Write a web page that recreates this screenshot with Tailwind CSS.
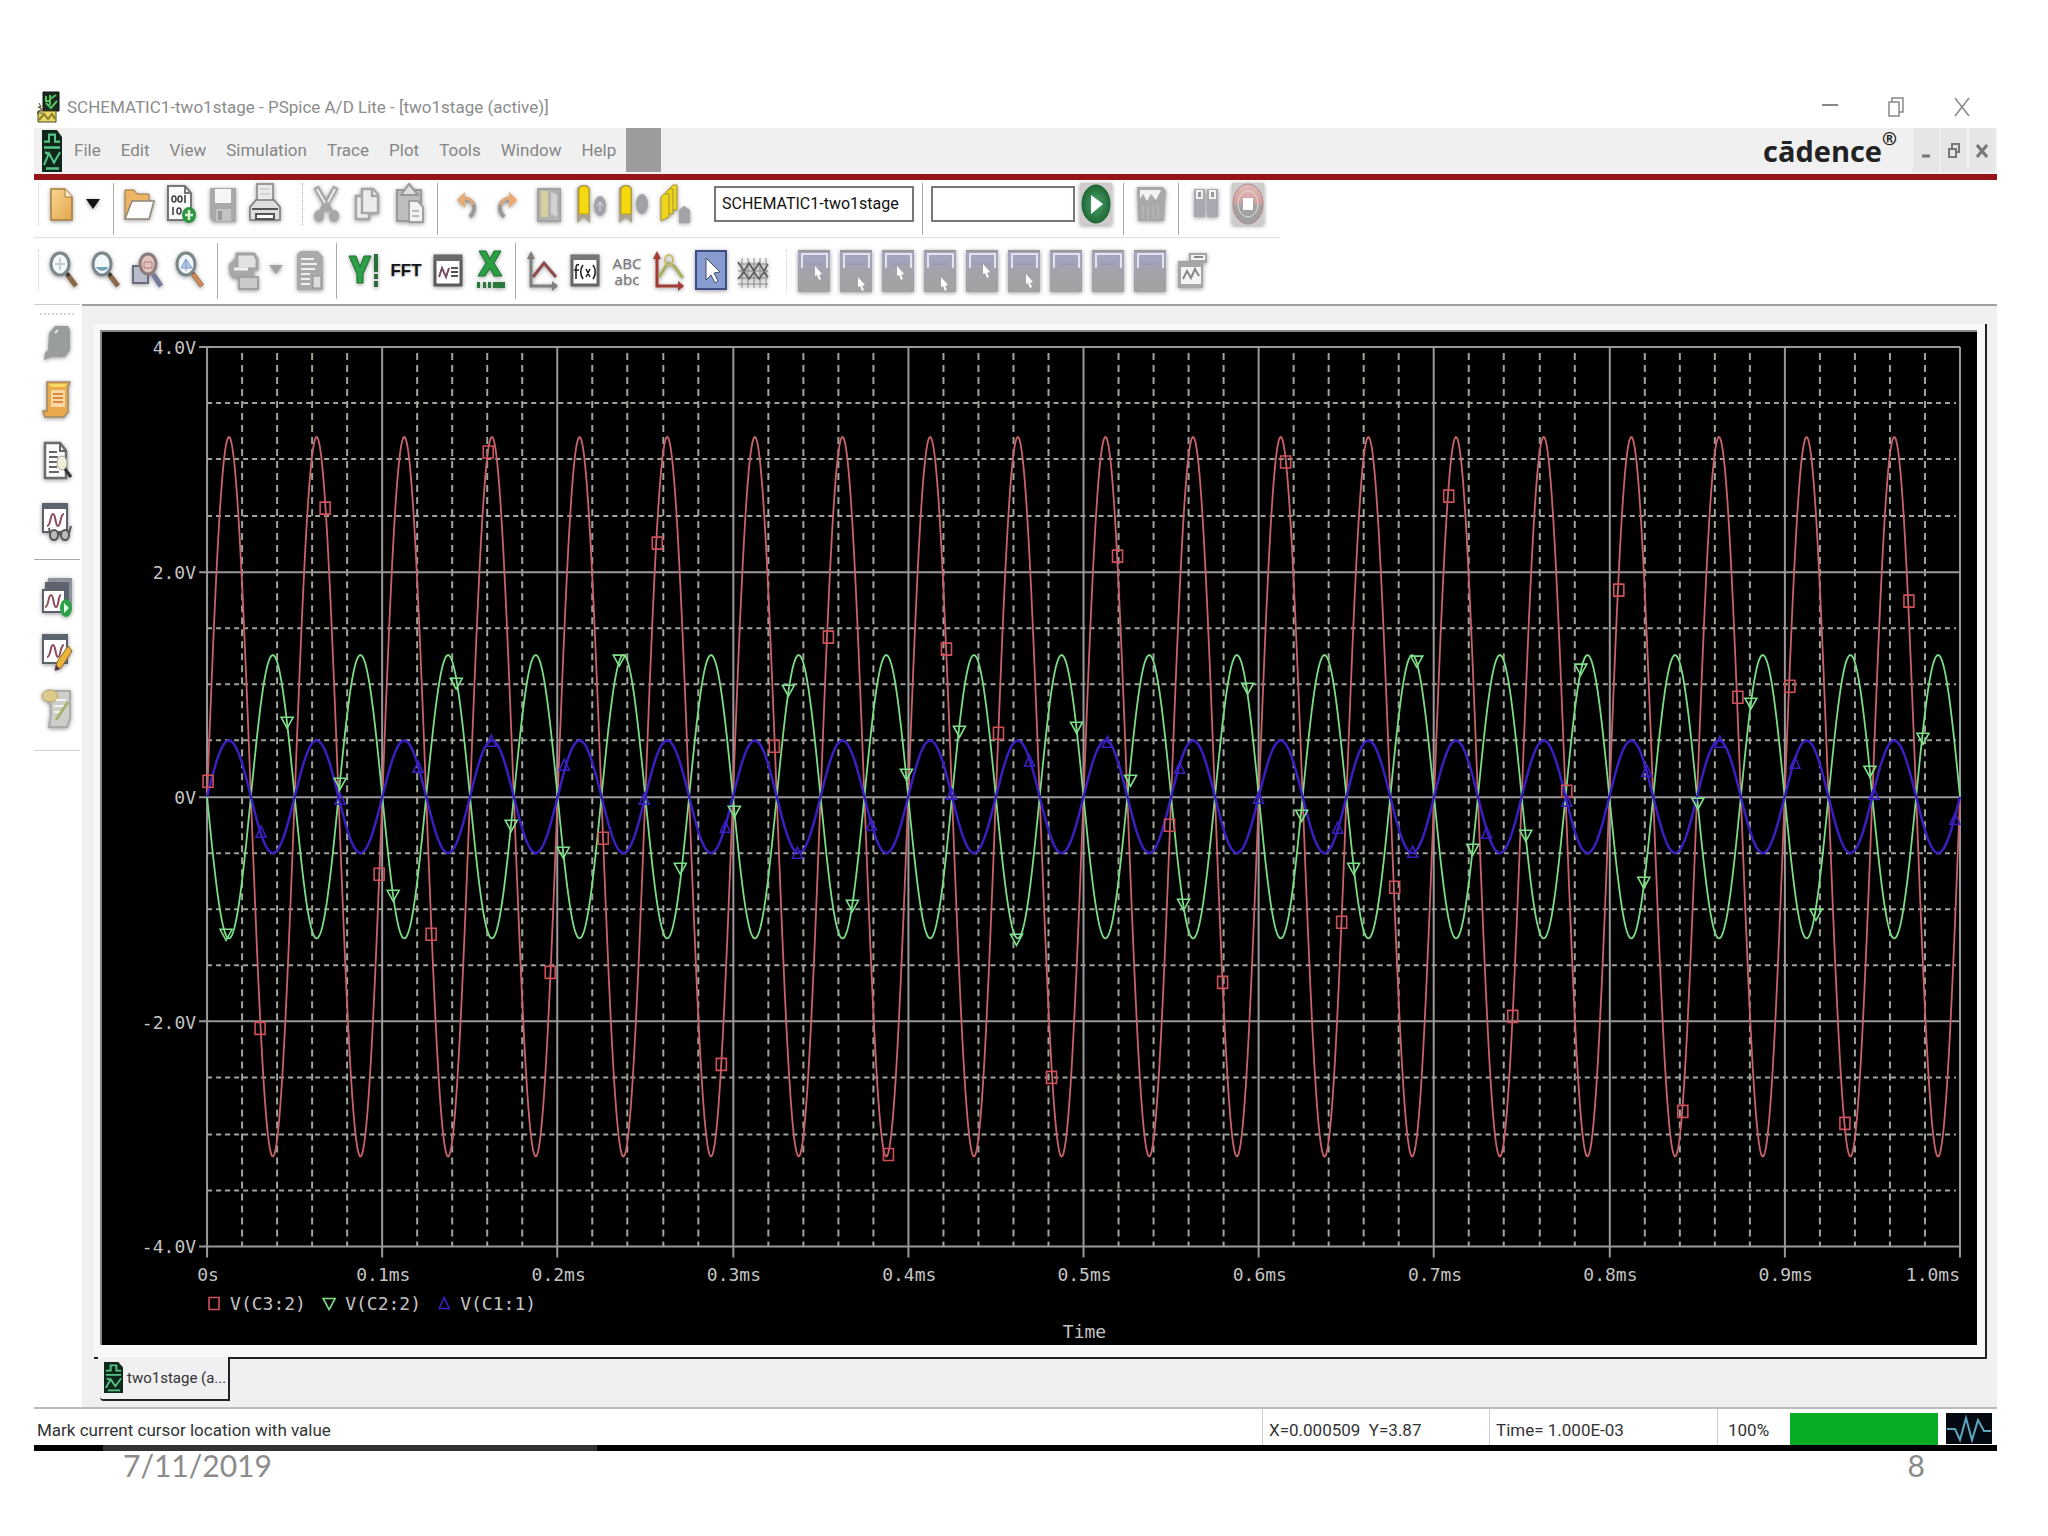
<!DOCTYPE html>
<html lang="en">
<head>
  <meta charset="utf-8">
  <meta name="viewport" content="width=device-width, initial-scale=1">
  <title>SCHEMATIC1-two1stage - PSpice A/D Lite</title>
  <script src="https://cdn.jsdelivr.net/npm/@tailwindcss/browser@4"></script>
</head>
<body class="bg-white font-['Roboto',sans-serif] text-[17px] leading-6">

<!-- Shared icon parts -->
<svg class="absolute h-0 w-0" aria-hidden="true">
  <defs>
    <linearGradient id="paper" x1="0" y1="0" x2="1" y2="1"><stop offset="0" stop-color="#f9d590"/><stop offset="1" stop-color="#e3a650"/></linearGradient>
    <linearGradient id="paneFill" x1="0" y1="0" x2="0" y2="1"><stop offset="0" stop-color="#a4a4c8"/><stop offset="0.5" stop-color="#a3a3ab"/><stop offset="1" stop-color="#a2a2a2"/></linearGradient>
    <linearGradient id="stopFill" x1="0" y1="0" x2="0" y2="1"><stop offset="0" stop-color="#e0bcbc"/><stop offset="0.45" stop-color="#d8a0a0"/><stop offset="0.55" stop-color="#a3a3a3"/><stop offset="1" stop-color="#a0a0a0"/></linearGradient>
    <radialGradient id="playFill"><stop offset="0" stop-color="#4fa36a"/><stop offset="1" stop-color="#1d6b38"/></radialGradient>
  </defs>
  <symbol id="lens" viewBox="0 0 32 42">
    <path d="M20 24l9 12" stroke="#8a6a48" stroke-width="5"/>
    <path d="M19 22l3 4" stroke="#333" stroke-width="3"/>
    <ellipse cx="13" cy="14" rx="9" ry="11" fill="#f3f8fa" stroke="#7c878c" stroke-width="3"/>
  </symbol>
  <symbol id="doc" viewBox="0 0 20 36" preserveAspectRatio="none">
    <path d="M0 0h15l5 6v30H0z" fill="#10281a"/>
    <path d="M2 10h5V4h6v6h5M2 15h16M2 30l5-10 5 8 6-9M3 19l6 3M4 33h13" fill="none" stroke="#58c488" stroke-width="2"/>
  </symbol>
  <symbol id="pane" viewBox="0 0 32 42">
    <path d="M0 0h32v42H0z" fill="url(#paneFill)"/>
    <path d="M0 1h32" stroke="#999" stroke-width="2"/>
    <path d="M4 18V4h25v14" fill="none" stroke="#e4e4ee" stroke-width="2"/>
    <path d="M8 14h17" stroke="#9292b4" stroke-width="1"/>
  </symbol>
  <symbol id="pointer" viewBox="0 0 8 14"><path d="M0 0l7 8-3 1 2 4-2 1-2-5-2 1z" fill="#fff"/></symbol>
  <symbol id="wavewin" viewBox="0 0 32 42">
    <path d="M2 3h24v28H2z" fill="#fff" stroke="#5c6068" stroke-width="2"/>
    <path d="M1 2h26v6H1z" fill="#5c6470"/>
    <path d="M6 25c4 0 3-12 6-12s2 12 5 12 2-12 6-12" fill="none" stroke="#8d4a58" stroke-width="2"/>
  </symbol>
</svg>

<div class="pt-[85px] pl-[34px] pr-[51px]">

  <!-- Title bar -->
  <header class="flex h-[43px] items-center text-[#8c8c8c]">
    <svg class="ml-0.5 h-8 w-6" viewBox="0 0 24 32">
      <path d="M7 1h16v19H7z" fill="#1c2a1e" stroke="#111"/>
      <path d="M10 5v5h4V4m0 10V8l6-4M10 12l5 5 6-7" fill="none" stroke="#52c463" stroke-width="2"/>
      <path d="M3 12l2 4H2l4 2-5 4h6M2 31V20h18v11z" fill="#e8d867" stroke="#4a4520"/>
      <path d="M3 29l5-6 4 5 4-5 3 5" fill="none" stroke="#8a7b20" stroke-width="2"/>
    </svg>
    <h1 class="ml-[7px]">SCHEMATIC1-two1stage - PSpice A/D Lite - [two1stage (active)]</h1>
    <div class="ml-auto flex pr-0.5">
      <button aria-label="Minimize" class="flex h-10 w-[66px] items-center justify-center"><svg class="h-5 w-4" viewBox="0 0 16 20"><path d="M0 8h16" stroke="#888" stroke-width="2"/></svg></button>
      <button aria-label="Restore" class="flex h-10 w-[66px] items-center justify-center"><svg class="h-5 w-4" viewBox="0 0 16 20"><path d="M1 5h10v14H1zM4 5V1h11v14h-4" fill="none" stroke="#888" stroke-width="1.5"/></svg></button>
      <button aria-label="Close" class="flex h-10 w-[66px] items-center justify-center"><svg class="h-5 w-4" viewBox="0 0 16 20"><path d="M1 1l14 18M15 1L1 19" stroke="#888" stroke-width="1.5"/></svg></button>
    </div>
  </header>

  <!-- Menu bar -->
  <nav class="flex h-[46px] items-stretch bg-[#f0f0f0] text-[#868686]">
    <svg class="mt-0.5 ml-2 h-[42px] w-5"><use href="#doc"/></svg>
    <div class="ml-3 flex items-center gap-5 pb-0.5">
      <button>File</button><button>Edit</button><button>View</button><button>Simulation</button><button>Trace</button><button>Plot</button><button>Tools</button><button>Window</button><button>Help</button>
    </div>
    <div class="ml-2.5 mb-0.5 w-[35px] bg-[#9c9c9c]"></div>
    <div class="ml-auto flex items-start text-[#222]">
      <span class="font-['Open_Sans',sans-serif] text-[29px] leading-[46px] font-bold">cādence</span>
      <sup class="top-0 mr-4 font-['Open_Sans',sans-serif] text-[18px] leading-5 font-bold">®</sup>
    </div>
    <div class="flex gap-0.5 pr-0.5 pb-0.5">
      <button aria-label="Minimize document" class="flex w-[26px] items-center justify-center bg-[#e6e6e6]"><svg class="h-4 w-3" viewBox="0 0 12 16"><path d="M2 14h8" stroke="#777" stroke-width="3"/></svg></button>
      <button aria-label="Restore document" class="flex w-[26px] items-center justify-center bg-[#e6e6e6]"><svg class="h-4 w-3" viewBox="0 0 12 16"><path d="M1 7h7v8H1zM4 6V2h7v8H9" fill="none" stroke="#777" stroke-width="2"/></svg></button>
      <button aria-label="Close document" class="flex w-[26px] items-center justify-center bg-[#e6e6e6]"><svg class="h-4 w-3" viewBox="0 0 12 16"><path d="M1 3l10 12M11 3L1 15" stroke="#777" stroke-width="3"/></svg></button>
    </div>
  </nav>
  <div class="h-1.5 bg-[#96141a]"></div>

  <!-- File / edit / simulate toolbar -->
  <div class="flex h-[58px] w-[1246px] max-w-full border-b border-[#ddd] pt-[3px] [&_button]:flex [&_button]:h-[42px] [&_button]:w-[42px] [&_button]:shrink-0 [&_button]:items-center [&_button]:justify-center [&_svg]:drop-shadow-[0_1px_2px_#0006]">
    <div class="ml-1 flex h-[42px] border-l border-dotted border-[#ccc]">
      <button aria-label="New"><svg class="h-[42px] w-8" viewBox="0 0 32 42"><path d="M7 6h14l7 8v23H7z" fill="url(#paper)" stroke="#a87f3e" stroke-width="1.5"/><path d="M21 6v8h7" fill="#fdeecb" stroke="#a87f3e"/></svg></button>
      <span class="flex w-6 items-center justify-center"><svg class="h-3 w-3.5" viewBox="0 0 14 12"><path d="M0 1h14L7 11z" fill="#111"/></svg></span>
    </div>
    <div class="ml-2 flex h-[52px] border-l border-[#aaa] pl-1">
      <button aria-label="Open"><svg class="h-[42px] w-8" viewBox="0 0 32 42"><path d="M2 36V7h9l3 4h12v10" fill="#eeb466" stroke="#9a7440"/><path d="M2 36l7-18h22l-5 18z" fill="#fdfdfd" stroke="#8d8577" stroke-width="1.5"/></svg></button>
      <button aria-label="Append waveform"><svg class="h-[42px] w-8" viewBox="0 0 32 42"><path d="M3 3h17l6 7v27H3z" fill="#fbfbfb" stroke="#777" stroke-width="2"/><path d="M20 3v7h6" fill="none" stroke="#777" stroke-width="2"/><g fill="none" stroke="#444" stroke-width="1.6"><ellipse cx="9" cy="16" rx="2" ry="3"/><ellipse cx="15" cy="16" rx="2" ry="3"/><path d="M20 12v8M8 24v8"/><ellipse cx="14" cy="28" rx="2" ry="3"/></g><ellipse cx="24" cy="32" rx="7" ry="8" fill="#2e9540"/><path d="M24 27v10M20 32h8" stroke="#d8f5d8" stroke-width="2.5"/></svg></button>
      <button aria-label="Save"><svg class="h-[42px] w-8" viewBox="0 0 32 42"><path d="M3 5h26v34H6l-3-4z" fill="#a9a9a9"/><path d="M8 6h16v14H8z" fill="#f6f6f6"/><path d="M9 26h15v12H9z" fill="#c3c3c3"/><path d="M11 28h4v9h-4z" fill="#999"/></svg></button>
      <button aria-label="Print"><svg class="h-[42px] w-8" viewBox="0 0 32 42"><path d="M8 20V1h16v19" fill="#e9e9e9" stroke="#999" stroke-width="2"/><path d="M11 6h10M11 11h10" stroke="#bbb"/><path d="M1 24l6-7h18l6 7v13H1z" fill="#ddd" stroke="#777" stroke-width="1.5"/><path d="M3 26h26M7 31h18v5H7z" fill="#fff" stroke="#555" stroke-width="2"/></svg></button>
    </div>
    <div class="ml-4 flex h-[42px] border-l border-dotted border-[#aaa] pl-0.5">
      <button aria-label="Cut"><svg class="h-[42px] w-8" viewBox="0 0 32 42"><path d="M6 4l14 24M26 4L12 28" stroke="#a6a6a6" stroke-width="6"/><path d="M7 6l8 14M25 6l-7 13" stroke="#ececec" stroke-width="2"/><ellipse cx="9" cy="33" rx="5" ry="6" fill="#a6a6a6"/><ellipse cx="24" cy="33" rx="5" ry="6" fill="#a6a6a6"/></svg></button>
      <button aria-label="Copy"><svg class="h-[42px] w-8" viewBox="0 0 32 42"><g fill="#ececec" stroke="#a6a6a6" stroke-width="2.5"><path d="M4 13h13v23H4z"/><path d="M10 6h11l5 6v18H10z"/><path d="M20 6v7h6"/></g></svg></button>
      <button aria-label="Paste"><svg class="h-[42px] w-8" viewBox="0 0 32 42"><path d="M3 7h24v31H3z" fill="#bdbdbd" stroke="#999" stroke-width="2"/><path d="M7 12l8-11 9 11z" fill="#e0e0e0" stroke="#999" stroke-width="2"/><path d="M15 18h9l5 6v15H15z" fill="#f2f2f2" stroke="#a0a0a0" stroke-width="2"/><path d="M18 28h7M18 33h7" stroke="#bbb" stroke-width="2"/></svg></button>
    </div>
    <div class="ml-1.5 flex h-[52px] border-l border-[#aaa] pl-1.5">
      <button aria-label="Undo"><svg class="h-[42px] w-8" viewBox="0 0 32 42"><path d="M10 17h6c10 0 12 9 5 17" fill="none" stroke="#9c9a98" stroke-width="4"/><path d="M15 15c5 0 8 3 9 7" fill="none" stroke="#e0a878" stroke-width="3"/><path d="M8 17l8-8v16z" fill="#e8a974"/></svg></button>
      <button aria-label="Redo"><svg class="h-[42px] w-8" viewBox="0 0 32 42"><path d="M24 17h-6c-10 0-12 9-5 17" fill="none" stroke="#9c9a98" stroke-width="4"/><path d="M19 15c-5 0-8 3-9 7" fill="none" stroke="#e0a878" stroke-width="3"/><path d="M26 17l-8-8v16z" fill="#e8a974"/></svg></button>
      <button aria-label="Toggle bookmark"><svg class="h-[42px] w-8" viewBox="0 0 32 42"><path d="M5 6h22v32H5z" fill="#b4b2ae" stroke="#a3a3a3" stroke-width="2"/><path d="M8 8h7v26H8z" fill="#d8cfa0"/><path d="M18 9l6 3v22l-6-3z" fill="#d2d2d2"/></svg></button>
      <button aria-label="Next bookmark"><svg class="h-[42px] w-8" viewBox="0 0 32 42"><path d="M2 40V5l4-3h6l3 3v35l-6-6z" fill="#aaa28c"/><path d="M4 31V6l3-3h4l3 3v25z" fill="#f5d90e" stroke="#b39c10"/><ellipse cx="25" cy="23" rx="6" ry="10" fill="#a2a2aa"/><path d="M25 28v-9l-3 4m3-4l3 4" fill="none" stroke="#ddd"/></svg></button>
      <button aria-label="Previous bookmark"><svg class="h-[42px] w-8" viewBox="0 0 32 42"><path d="M2 40V5l4-3h6l3 3v35l-6-6z" fill="#aaa28c"/><path d="M4 31V6l3-3h4l3 3v25z" fill="#f5d90e" stroke="#b39c10"/><ellipse cx="25" cy="21" rx="6" ry="10" fill="#a2a2a6"/></svg></button>
      <button aria-label="Clear bookmarks"><svg class="h-[42px] w-8" viewBox="0 0 32 42"><g fill="#eed41c" stroke="#a29430"><path d="M11 27V5l3-3h4v25z"/><path d="M7 31V9l3-3h4v25z"/><path d="M2 38V14l3-3h5v23z"/></g><path d="M20 40V27l5-4 6 4v13z" fill="#a4a4a8"/></svg></button>
    </div>
    <div class="ml-[18px] flex gap-2">
      <select aria-label="Simulation profile" class="mt-[3px] h-9 w-[200px] appearance-none border-2 border-[#777] bg-white pl-1.5 text-[16px] text-[#111]"><option>SCHEMATIC1-two1stage</option></select>
      <div class="h-[52px] w-px bg-[#aaa]"></div>
      <input aria-label="Run to time" type="text" class="mt-[3px] h-9 w-[144px] border-2 border-[#777] bg-white px-2">
    </div>
    <button aria-label="Run"><svg class="h-[42px] w-8" viewBox="0 0 32 42"><path d="M0 0h32v42H0z" fill="#ccc"/><ellipse cx="16" cy="21" rx="14" ry="19" fill="url(#playFill)" stroke="#1c5a30"/><path d="M11 12l12 9-12 10z" fill="#fff"/></svg></button>
    <div class="ml-1.5 flex h-[52px] border-x border-[#aaa] px-1.5">
      <button aria-label="View results"><svg class="h-[42px] w-8" viewBox="0 0 32 42"><path d="M2 4h26l3 4-2 30H3z" fill="#a9a9a9"/><path d="M5 7h21l-5 10-5-6-4 7-4-7-3 5z" fill="#f3f3f3"/><path d="M8 22v14M13 24v12M18 22v14M23 20v16" stroke="#bbb"/></svg></button>
    </div>
    <button aria-label="Pause" class="ml-1.5"><svg class="h-[42px] w-8" viewBox="0 0 32 42"><path d="M4 6h11v28H4zM17 6h11v28H17z" fill="#a8a8b0"/><path d="M7 8h5v7H7zM20 8h5v7h-5z" fill="#999" stroke="#f2f2f2" stroke-width="2"/></svg></button>
    <button aria-label="Stop"><svg class="h-[42px] w-8" viewBox="0 0 32 42"><path d="M0 0h32v42H0z" fill="#cfcccc"/><ellipse cx="16" cy="21" rx="15" ry="20" fill="url(#stopFill)" stroke="#b08888"/><ellipse cx="16" cy="21" rx="10" ry="13" fill="none" stroke="#ddd"/><path d="M11 15h10v12H11z" fill="#fff"/></svg></button>
  </div>

  <!-- Probe toolbar -->
  <div class="flex h-[66px] items-center [&_button]:flex [&_button]:h-[42px] [&_button]:w-[42px] [&_button]:shrink-0 [&_button]:items-center [&_button]:justify-center [&_svg]:h-[42px] [&_svg]:w-8 [&_svg]:drop-shadow-[0_1px_2px_#0006]">
    <div class="ml-1 flex h-[42px] border-l border-dotted border-[#ccc] pr-[7px] pl-[3px]">
      <button aria-label="Zoom in"><svg viewBox="0 0 32 42"><use href="#lens"/><path d="M13 8v12M8 14h10" stroke="#c5ced2" stroke-width="2"/></svg></button>
      <button aria-label="Zoom out"><svg viewBox="0 0 32 42"><use href="#lens"/><path d="M7 17h12c-1 5-10 5-12 0z" fill="#6fa3b5"/></svg></button>
      <button aria-label="Zoom area"><svg viewBox="0 0 32 42"><path d="M2 16h15v17H2z" fill="#b9bccb" stroke="#686b7c" stroke-width="2"/><path d="M22 24l8 12" stroke="#777c9c" stroke-width="5"/><ellipse cx="17" cy="14" rx="8" ry="10" fill="#dfc3bd" stroke="#8a7a7c" stroke-width="3"/><path d="M13 12h8v6h-8z" fill="none" stroke="#b97c70"/></svg></button>
      <button aria-label="Zoom fit"><svg viewBox="0 0 32 42"><use href="#lens"/><path d="M20 24l9 12" stroke="#cd8a58" stroke-width="4"/><path d="M8 18l5-9 6 9zM13 9v12" fill="#b4c9e4" stroke="#7c9cc6"/></svg></button>
    </div>
    <div class="flex h-[56px] items-center border-x border-[#aaa] pr-1.5 pl-1">
      <button aria-label="Log axis"><svg viewBox="0 0 32 42"><path d="M10 4h17l3 5v10H10z" fill="#e2e2e2" stroke="#a3a3a3" stroke-width="3"/><path d="M2 14l7-7 3 12h15v10H8C3 28 1 22 2 14z" fill="#a8a8a8"/><path d="M7 19h14" stroke="#f3f3f3" stroke-width="3"/><path d="M12 27h19v12H12z" fill="#c9c9c9" stroke="#a0a0a0" stroke-width="2"/></svg></button>
      <span class="flex w-6 justify-center"><svg viewBox="0 0 32 42"><path d="M7 13h18L16 25z" fill="#a0a0a0"/></svg></span>
      <button aria-label="Report"><svg viewBox="0 0 32 42"><path d="M4 4l4-3h17l5 6v33H4z" fill="#aaa"/><path d="M8 9h13M8 14h16M8 19h14M8 24h9M8 29h9M8 34h9" stroke="#f0f0f0" stroke-width="2"/><path d="M20 26h8v12h-8z" fill="#ddd" stroke="#8d8d8d"/></svg></button>
    </div>
    <div class="flex h-[56px] items-center border-r border-[#aaa] pr-1 pl-1.5">
      <button aria-label="Y axis"><svg viewBox="0 0 32 42"><path d="M1 6h7l4 11 4-11h7l-8 18v9H9v-9z" fill="#2ca148" stroke="#1c6e30"/><path d="M26 4h4v18h-4zM26 24h4v5h-4zM26 31h4v6h-4z" fill="#2c6b3a"/></svg></button>
      <button aria-label="FFT" class="font-['Liberation_Sans',sans-serif] text-[17px] font-bold text-[#161616] text-shadow-[0_1px_2px_#0006]">FFT</button>
      <button aria-label="Performance analysis"><svg viewBox="0 0 32 42"><path d="M3 6h26v29H3z" fill="#fff" stroke="#5a5a5a" stroke-width="3"/><path d="M2 5h28v6H2z" fill="#6a6a6a"/><path d="M7 27l3-9 4 9 3-9" fill="none" stroke="#7a4c64" stroke-width="2"/><path d="M19 18h7M19 22h7M19 26h7" stroke="#555" stroke-width="2"/></svg></button>
      <button aria-label="Excel export"><svg viewBox="0 0 32 42"><path d="M5 1h7l4 8 4-8h7l-7 12 8 13h-8l-4-8-5 8H4l8-13z" fill="#2aa043" stroke="#1c6e30"/><path d="M3 32h3v6H3zM9 32h3v6H9zM14 32h3v6h-3zM19 32h12v6H19z" fill="#287a3c"/></svg></button>
    </div>
    <div class="flex h-[42px] pl-1.5">
      <button aria-label="Add trace"><svg viewBox="0 0 32 42"><path d="M4 4v32h26" fill="none" stroke="#808080" stroke-width="3"/><path d="M0 9l4-8 4 8zM25 31l6 5-6 5z" fill="#808080"/><path d="M6 27l11-14 12 14" fill="none" stroke="#8e4a4a" stroke-width="3"/></svg></button>
      <button aria-label="Evaluate function"><svg viewBox="0 0 32 42"><path d="M3 6h26v29H3z" fill="#fff" stroke="#666" stroke-width="3"/><path d="M2 5h28v5H2z" fill="#777"/><path d="M10 15c-2-1-3 0-3 3v11M5 20h5M14 15c-3 4-3 10 0 14M17 19l4 8M21 19l-4 8M24 15c3 4 3 10 0 14" fill="none" stroke="#222" stroke-width="1.6"/></svg></button>
      <button aria-label="Text label" class="flex-col font-['Noto_Sans',sans-serif] text-[15px] leading-4 text-[#777] text-shadow-[0_1px_2px_#0004]"><span>ABC</span><span>abc</span></button>
      <button aria-label="Mark data points"><svg viewBox="0 0 32 42"><path d="M4 4v32h26" fill="none" stroke="#a33c34" stroke-width="3"/><path d="M0 9l4-8 4 8zM25 31l6 5-6 5z" fill="#a33c34"/><path d="M6 27l9-14 6 3 9 12" fill="none" stroke="#a8b060" stroke-width="3"/><ellipse cx="16" cy="10" rx="4" ry="5" fill="none" stroke="#c9bb70" stroke-width="2"/></svg></button>
      <button aria-label="Toggle cursor"><svg viewBox="0 0 32 42"><path d="M1 1h30v38H1z" fill="#889cd0" stroke="#3d4f86" stroke-width="2"/><path d="M11 8v22l5-5 4 8 3-2-4-8 6-1z" fill="#fff" stroke="#444c66"/></svg></button>
      <button aria-label="Grid marks"><svg viewBox="0 0 32 42"><path d="M5 8v30M11 8v30M17 8v30M23 8v30M29 8v30M1 14h30M1 21h30M1 28h30M1 34h30" stroke="#8a8a8a" stroke-width="1"/><path d="M1 12l6 9 5-8 5 8 5-8 5 8 4-7M1 29l6-7 5 7 5-7 5 7 5-7 4 5" fill="none" stroke="#5a5a5a" stroke-width="1.5"/></svg></button>
    </div>
    <div class="ml-3 flex h-[42px] border-l border-dotted border-[#ccc] pl-1.5">
      <button aria-label="Cursor peak"><svg viewBox="0 0 32 42"><use href="#pane"/><use href="#pointer" x="17" y="16" width="8" height="14"/></svg></button>
      <button aria-label="Cursor trough"><svg viewBox="0 0 32 42"><use href="#pane"/><use href="#pointer" x="18" y="27" width="8" height="14"/></svg></button>
      <button aria-label="Cursor slope"><svg viewBox="0 0 32 42"><use href="#pane"/><use href="#pointer" x="15" y="16" width="8" height="14"/></svg></button>
      <button aria-label="Cursor min"><svg viewBox="0 0 32 42"><use href="#pane"/><use href="#pointer" x="17" y="27" width="8" height="14"/></svg></button>
      <button aria-label="Cursor max"><svg viewBox="0 0 32 42"><use href="#pane"/><use href="#pointer" x="17" y="14" width="8" height="14"/></svg></button>
      <button aria-label="Cursor point"><svg viewBox="0 0 32 42"><use href="#pane"/><use href="#pointer" x="18" y="24" width="8" height="14"/></svg></button>
      <button aria-label="Cursor search"><svg viewBox="0 0 32 42"><use href="#pane"/></svg></button>
      <button aria-label="Cursor next transition"><svg viewBox="0 0 32 42"><use href="#pane"/></svg></button>
      <button aria-label="Cursor previous transition"><svg viewBox="0 0 32 42"><use href="#pane"/></svg></button>
      <button aria-label="Mark label"><svg viewBox="0 0 32 42"><path d="M13 3h18v10h-4v25H2V11h11z" fill="#a6a6a6"/><path d="M15 5h14v5H15zM5 17h20v17H5z" fill="#f4f4f4"/><path d="M18 7h9" stroke="#888" stroke-width="2"/><path d="M7 29l4-8 4 7 4-9 4 7" fill="none" stroke="#888" stroke-width="2"/></svg></button>
    </div>
  </div>

  <!-- Work area -->
  <div class="flex">
    <aside class="w-[46px] shrink-0 border-t border-[#ccc] [&_button]:mx-auto [&_button]:block [&_svg]:h-[42px] [&_svg]:w-8 [&_svg]:drop-shadow-[0_1px_2px_#0006]">
      <div class="mx-1.5 mt-2 h-0 border-t-2 border-dotted border-[#d5d5d5]"></div>
      <div class="flex flex-col gap-[18px] border-b border-[#aaa] pt-1.5 pb-4">
        <button aria-label="Session log"><svg viewBox="0 0 32 42"><path d="M8 12l6-7h13l2 4v20l-5 7H10l-7 3 1-7 3-3z" fill="#999d9b"/><path d="M14 12l3-3" stroke="#e5e5e5" stroke-width="2"/></svg></button>
        <button aria-label="Output file"><svg viewBox="0 0 32 42"><path d="M6 1h23l-2 5v25l-4 5H4l-2-6h4z" fill="#eaa94a" stroke="#a08a68" stroke-width="1.5"/><path d="M8 3h18l-2 3H10z" fill="#f5da62"/><path d="M10 9h14v17H10z" fill="#f8d9a6"/><path d="M12 13h10M12 17h10M12 21h10" stroke="#d88a3a" stroke-width="2"/></svg></button>
        <button aria-label="Circuit file"><svg viewBox="0 0 32 42"><path d="M4 2h15l6 8v27H4z" fill="#fdfdfd" stroke="#6c6c6c" stroke-width="2.5"/><path d="M19 2v8h6M8 11h8M8 16h9M8 21h9M8 26h8M8 31h10" fill="none" stroke="#666" stroke-width="2"/><ellipse cx="21" cy="22" rx="5" ry="7" fill="#f2efd8" stroke="#aaa" stroke-width="1"/><path d="M24 28l6 8" stroke="#333" stroke-width="3"/></svg></button>
        <button aria-label="View simulation results"><svg viewBox="0 0 32 42"><use href="#wavewin"/><g fill="#bbb" stroke="#555" stroke-width="2"><ellipse cx="13" cy="34" rx="4" ry="5"/><ellipse cx="24" cy="34" rx="4" ry="5"/><path d="M9 32l-1-5M28 32l2-7M17 33h3" fill="none"/></g></svg></button>
      </div>
      <div class="flex flex-col gap-3.5 border-b border-[#d8d4c4] pt-4 pb-5">
        <button aria-label="Simulation queue"><svg viewBox="0 0 32 42"><path d="M7 2h24v26H7z" fill="#8d929c"/><path d="M4 6h24v26H4z" fill="#5e646e"/><path d="M2 14h22v22H2z" fill="#fff" stroke="#5c6068" stroke-width="2"/><path d="M4 31c4 0 3-12 6-12s2 12 5 12 2-12 5-12" fill="none" stroke="#8d4a58" stroke-width="2"/><ellipse cx="25" cy="32" rx="6" ry="9" fill="#2ba048"/><path d="M23 27l5 5-5 5z" fill="#e2ffe6"/></svg></button>
        <button aria-label="Edit profile"><svg viewBox="0 0 32 42"><use href="#wavewin"/><path d="M14 38l2-8L27 14l4 5-11 17z" fill="#ecb43c" stroke="#8a6420"/><path d="M14 39l1-6 4 4z" fill="#4b3350"/></svg></button>
        <button aria-label="Notes"><svg viewBox="0 0 32 42"><path d="M9 3h20v27l-3 9H8l2-12z" fill="#cdcfc8" stroke="#aaa" stroke-width="2"/><ellipse cx="9" cy="8" rx="8" ry="6" fill="#dccb8a" stroke="#b3a468"/><path d="M15 12h10M13 18h10M13 24h8" stroke="#f4f4f4" stroke-width="2"/><path d="M15 32l12-18" stroke="#a9b070" stroke-width="3"/></svg></button>
      </div>
    </aside>

    <main class="ml-0.5 min-w-0 flex-1 border-t-2 border-[#a0a0a0] bg-[#f0eff1] pt-[18px] pr-2.5 pl-3">
      <div class="border-r-2 border-[#222] bg-[#f8f7fa] pt-1.5 pr-2 pb-3 pl-1.5">
        <svg id="plot" class="block w-full border-t-2 border-l-2 border-[#888] bg-black" viewBox="0 0 1874 1012" role="img" aria-label="Transient response of V(C3:2), V(C2:2) and V(C1:1)"></svg>
      </div>
      <div class="flex">
        <div class="mr-0.5 w-1 border-t-2 border-[#222]"></div>
        <button class="mb-1.5 flex h-11 items-center rounded-bl border-r-2 border-b-2 border-[#222] pr-0.5 pl-1 text-[15px] text-[#333]">
          <svg class="mr-1 h-[31px] w-[19px]"><use href="#doc"/></svg>two1stage (a...
        </button>
        <div class="flex-1 border-t-2 border-[#222]"></div>
      </div>
    </main>
  </div>

  <!-- Status bar -->
  <footer class="flex h-[38px] items-stretch border-t-2 border-[#bbb] text-[#333] [&>span]:flex [&>span]:items-center [&>span]:pt-1.5">
    <span class="pl-[3px]">Mark current cursor location with value</span>
    <span class="ml-auto w-[227px] border-l border-[#ccc] pl-1.5 whitespace-pre">X=0.000509  Y=3.87</span>
    <span class="w-[228px] border-l border-[#ccc] pl-1.5">Time= 1.000E-03</span>
    <span class="w-[73px] border-l border-[#ccc] pl-2.5">100%</span>
    <div role="progressbar" aria-label="Simulation progress" aria-valuenow="100" class="mt-1 w-[148px] bg-[#07ad22]"></div>
    <svg class="mt-1 mr-[5px] ml-2 h-[31px] w-[46px] bg-[#050a12]" viewBox="0 0 46 31"><path d="M1 16h8l5 11 6-22 6 22 6-20 6 11h7" fill="none" stroke="#5aa8c0" stroke-width="2"/></svg>
  </footer>
  <div class="flex h-1.5 bg-black"><div class="ml-[69px] w-[494px] bg-[#333]"></div></div>
</div>

<!-- Slide footer -->
<div class="flex justify-between pr-[123px] pl-[123px] font-['Lato',sans-serif] text-[30px] leading-7 text-[#8b8b8b]">
  <span>7/11/2019</span>
  <span>8</span>
</div>

<script>
  const plot = document.getElementById("plot");
  const X0 = 105, X1 = 1857, Y0 = 15, Y1 = 914; // plot frame
  const MID = (Y0 + Y1) / 2;
  const VOLT = (Y1 - Y0) / 8;

  const add = (tag, attrs, text) => {
    const el = document.createElementNS("http://www.w3.org/2000/svg", tag);
    for (const k in attrs) el.setAttribute(k, attrs[k]);
    if (text) el.textContent = text;
    plot.appendChild(el);
  };
  const line = (x1, y1, x2, y2, dash) =>
    add("path", {
      d: `M${Math.round(x1)} ${Math.round(y1)}L${Math.round(x2)} ${Math.round(y2)}`,
      stroke: dash ? "#9ea49a" : "#999",
      "stroke-width": 2,
      "stroke-dasharray": dash || "none",
    });
  const label = (x, y, text, anchor) =>
    add("text", {
      x, y, fill: "#c4c4c4", "text-anchor": anchor,
      "font-family": "DejaVu Sans Mono, monospace", "font-size": 18,
    }, text);

  // Grid
  for (let i = 0; i <= 50; i++) {
    const x = X0 + ((X1 - X0) * i) / 50;
    if (i % 5) line(x, Y0 + 6, x, Y1, "7 5");
    else line(x, Y0, x, Y1 + 11);
  }
  for (let i = 0; i <= 16; i++) {
    const y = Y0 + ((Y1 - Y0) * i) / 16;
    if (i % 4) line(X0, y, X1 - 4, y, "5 4");
    else line(X0 - 8, y, X1, y);
  }

  // Axis labels
  ["4.0V", "2.0V", "0V", "-2.0V", "-4.0V"].forEach((t, i) =>
    label(X0 - 11, Y0 + 7 + i * 2 * VOLT, t, "end"));
  for (let i = 0; i < 10; i++)
    label(X0 + 1 + i * 175.2, Y1 + 35, i ? `0.${i}ms` : "0s", "middle");
  label(X1, Y1 + 35, "1.0ms", "end");
  label(982, Y1 + 91, "Time", "middle");

  // Traces, 20 cycles in 1 ms
  const trace = (volts, color, width) => {
    let d = "";
    for (let x = X0; x <= X1; x++) {
      const y = MID - volts * VOLT * Math.sin(((x - X0) / (X1 - X0)) * 40 * Math.PI);
      d += `${d ? "L" : "M"}${x} ${y.toFixed(1)}`;
    }
    add("path", { d, fill: "none", stroke: color, "stroke-width": width });
  };
  trace(3.2, "#c8626a", 1.8);
  trace(-1.26, "#7cdc86", 1.8);
  trace(0.5, "#3a1fc0", 2.5);

  const SHAPES = {
    square: "m-5-6h10v12h-10z",
    down: "m-6-5h12l-6 11z",
    up: "m-5 5h10l-5-11z",
  };
  const mark = (shape, color, x, y) =>
    add("path", { d: `M${x} ${y}${SHAPES[shape]}`, fill: "none", stroke: color, "stroke-width": 1.6 });

  const RED = [[106,449],[158,696],[223,176],[277,542],[329,602],[386,120],[448,640],[501,506],[555,211],[619,732],[672,414],[726,305],[786,822],[844,317],[896,401],[949,745],[1015,224],[1067,493],[1120,650],[1183,130],[1239,590],[1292,555],[1346,164],[1410,684],[1464,459],[1516,258],[1580,779],[1635,365],[1687,354],[1742,791],[1806,269]];
  const GREEN = [[124,602],[185,390],[238,451],[291,563],[354,351],[409,493],[461,520],[517,328],[578,536],[632,479],[686,358],[750,573],[804,442],[857,399],[914,607],[974,395],[1028,448],[1081,572],[1145,356],[1199,483],[1251,536],[1314,329],[1370,517],[1423,503],[1478,337],[1541,550],[1595,471],[1648,371],[1713,582],[1767,439],[1820,406]];
  const BLUE = [[159,500],[238,467],[316,435],[389,409],[462,433],[542,467],[623,495],[695,521],[769,493],[849,462],[927,429],[1005,410],[1077,436],[1156,466],[1235,496],[1310,520],[1384,501],[1464,469],[1544,439],[1617,410],[1692,431],[1771,462],[1852,487]];
  RED.forEach(([x, y]) => mark("square", "#d0505a", x, y));
  GREEN.forEach(([x, y]) => mark("down", "#7fe08a", x, y));
  BLUE.forEach(([x, y]) => mark("up", "#3a1fc0", x, y));

  // Legend
  [["square", "#d0505a", "V(C3:2)"], ["down", "#7fe08a", "V(C2:2)"], ["up", "#3a1fc0", "V(C1:1)"]]
    .forEach(([shape, color, name], i) => {
      mark(shape, color, 112 + i * 115, Y1 + 57);
      label(128 + i * 115, Y1 + 63, name, "start");
    });
</script>
</body>
</html>
